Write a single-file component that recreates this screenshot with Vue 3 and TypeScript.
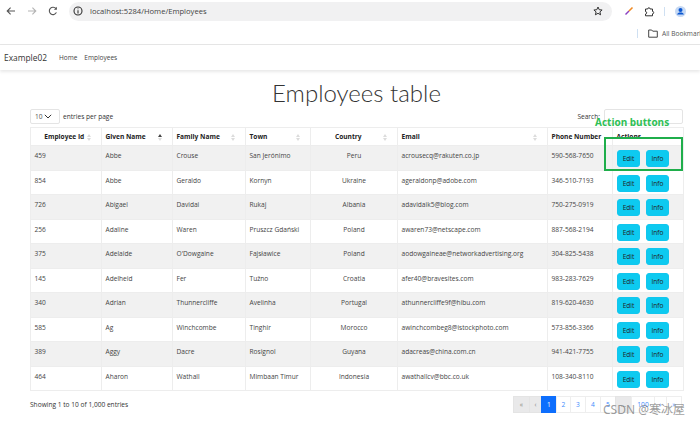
<script setup lang="ts">
interface Employee {
  id: number
  given: string
  family: string
  town: string
  country: string
  email: string
  phone: string
}
const employees: Employee[] = [
  { id: 459, given: 'Abbe', family: 'Crouse', town: 'San Jerónimo', country: 'Peru', email: 'acrousecq@rakuten.co.jp', phone: '590-568-7650' },
  { id: 854, given: 'Abbe', family: 'Geraldo', town: 'Kornyn', country: 'Ukraine', email: 'ageraldonp@adobe.com', phone: '346-510-7193' },
  { id: 726, given: 'Abigael', family: 'Davidai', town: 'Rukaj', country: 'Albania', email: 'adavidaik5@blog.com', phone: '750-275-0919' },
  { id: 256, given: 'Adaline', family: 'Waren', town: 'Pruszcz Gdański', country: 'Poland', email: 'awaren73@netscape.com', phone: '887-568-2194' },
  { id: 375, given: 'Adelaide', family: "O'Dowgaine", town: 'Fajsławice', country: 'Poland', email: 'aodowgaineae@networkadvertising.org', phone: '304-825-5438' },
  { id: 145, given: 'Adelheid', family: 'Fer', town: 'Tužno', country: 'Croatia', email: 'afer40@bravesites.com', phone: '983-283-7629' },
  { id: 340, given: 'Adrian', family: 'Thunnercliffe', town: 'Avelinha', country: 'Portugal', email: 'athunnercliffe9f@hibu.com', phone: '819-620-4630' },
  { id: 585, given: 'Ag', family: 'Winchcombe', town: 'Tinghir', country: 'Morocco', email: 'awinchcombeg8@istockphoto.com', phone: '573-856-3366' },
  { id: 389, given: 'Aggy', family: 'Dacre', town: 'Rosignol', country: 'Guyana', email: 'adacreas@china.com.cn', phone: '941-421-7755' },
  { id: 464, given: 'Aharon', family: 'Wathall', town: 'Mimbaan Timur', country: 'Indonesia', email: 'awathallcv@bbc.co.uk', phone: '108-340-8110' },
]
const columns = [
  { label: 'Employee Id', cls: 'c1 center', sort: 'none' },
  { label: 'Given Name', cls: 'c2', sort: 'asc' },
  { label: 'Family Name', cls: 'c3', sort: 'none' },
  { label: 'Town', cls: 'c4', sort: 'none' },
  { label: 'Country', cls: 'c5 center', sort: 'none' },
  { label: 'Email', cls: 'c6', sort: 'none' },
  { label: 'Phone Number', cls: 'c7', sort: '' },
  { label: 'Actions', cls: 'c8', sort: '' },
]
const pages = [
  { label: '«', cls: 'off w16' },
  { label: '‹', cls: 'off w12' },
  { label: '1', cls: 'active w15' },
  { label: '2', cls: 'w14' },
  { label: '3', cls: 'w15' },
  { label: '4', cls: 'w15' },
  { label: '5', cls: 'w15' },
  { label: '…', cls: 'off w16' },
  { label: '100', cls: 'w23' },
  { label: '›', cls: 'w12' },
  { label: '»', cls: 'w15' },
]
</script>

<template>
  <div class="page">
    <header class="toolbar">
      <svg class="tb back" width="10" height="10" viewBox="0 0 10 10"><path d="M9 5H1.500M4.600 1.600 1.200 5l3.400 3.400" fill="none" stroke="#555" stroke-width="1.100"/></svg>
      <svg class="tb fwd" width="10" height="10" viewBox="0 0 10 10"><path d="M1 5h7.500M5.400 1.600 8.800 5 5.400 8.400" fill="none" stroke="#b4b4b4" stroke-width="1.100"/></svg>
      <svg class="tb reload" width="10" height="10" viewBox="0 0 10 10"><path d="M8.400 6.400A3.700 3.700 0 1 1 8 2.700" fill="none" stroke="#555" stroke-width="1.100"/><path d="M8.900.8v3H5.900z" fill="#555"/></svg>
      <div class="omnibox">
        <svg class="tb" width="10" height="10" viewBox="0 0 10 10"><circle cx="5" cy="5" r="4" fill="none" stroke="#333" stroke-width="1.100"/><path d="M5 2.400v.9M5 4.200v3.200" stroke="#333" stroke-width="1.100"/></svg>
        <span class="url">localhost:5284/Home/Employees</span>
        <svg class="star" width="10" height="10" viewBox="0 0 10 10"><path d="M5 1l1.200 2.700 2.900.3-2.200 1.900.7 2.900L5 7.300 2.400 8.800l.7-2.900L.9 4l2.900-.3z" fill="none" stroke="#333" stroke-width="1"/></svg>
      </div>
      <svg class="pen" width="10" height="10" viewBox="0 0 10 10"><path d="M1.500 8.500 5 5" stroke="#8a3fc0" stroke-width="1.400"/><path d="M5 5 8.500 1.500" stroke="#f08a24" stroke-width="1.600"/></svg>
      <svg class="ext" width="11" height="11" viewBox="0 0 11 11"><path d="M1.500 3h2.200a1.200 1.200 0 0 1 2.400 0h2.400v2.400a1.200 1.200 0 0 1 0 2.400v2H1.500V8a1.200 1.200 0 0 0 0-2.400z" fill="none" stroke="#333" stroke-width="1"/></svg>
      <span class="tb-sep"></span>
      <span class="avatar"><svg width="11" height="11" viewBox="0 0 11 11"><circle cx="5.500" cy="5.500" r="5.500" fill="#c6d9f4"/><circle cx="5.500" cy="4" r="2" fill="#0b57d0"/><path d="M2 8.600c.4-1.500 1.800-2.100 3.500-2.100s3.100.6 3.500 2.100z" fill="#0b57d0"/></svg></span>
    </header>
    <div class="bookmarks">
      <span class="bm-sep"></span>
      <svg class="tb" width="10" height="9" viewBox="0 0 10 9"><path d="M.7 1h3l1 1.200h4.600v6H.7z" fill="none" stroke="#444" stroke-width="1"/></svg>
      <span class="bm-text">All Bookmarks</span>
    </div>
    <nav class="navbar">
      <span class="brand">Example02</span>
      <a class="nav-link">Home</a>
      <a class="nav-link">Employees</a>
    </nav>
    <main class="content">
      <h1 class="title">Employees table</h1>
      <div class="controls">
        <div class="entries">
          <span class="select">10
            <svg width="8" height="5" viewBox="0 0 8 5"><path d="M.8.8 4 4l3.200-3.200" fill="none" stroke="#333" stroke-width="1"/></svg>
          </span>
          <span>entries per page</span>
        </div>
        <div class="search">
          <span>Search:</span>
          <span class="search-box"></span>
        </div>
      </div>
      <table class="grid">
        <thead>
          <tr>
            <th v-for="c in columns" :key="c.label" :class="c.cls">
              <span class="th-label">{{ c.label }}</span>
              <span v-if="c.sort" class="sort">
                <i class="up" :class="{ on: c.sort === 'asc' }"></i>
                <i class="down"></i>
              </span>
            </th>
          </tr>
        </thead>
        <tbody>
          <tr v-for="e in employees" :key="e.id">
            <td>{{ e.id }}</td>
            <td>{{ e.given }}</td>
            <td>{{ e.family }}</td>
            <td>{{ e.town }}</td>
            <td class="center">{{ e.country }}</td>
            <td>{{ e.email }}</td>
            <td>{{ e.phone }}</td>
            <td class="actions">
              <div class="btns">
                <button class="btn">Edit</button>
                <button class="btn">Info</button>
              </div>
            </td>
          </tr>
        </tbody>
      </table>
      <div class="footer">
        <span class="info">Showing 1 to 10 of 1,000 entries</span>
        <div class="pager">
          <span v-for="p in pages" :key="p.label" class="pg" :class="p.cls">{{ p.label }}</span>
        </div>
      </div>
    </main>
    <div class="callout"></div>
    <div class="callout-label">Action buttons</div>
    <div class="watermark">CSDN @寒冰屋</div>
  </div>
</template>

<style scoped>
.page {
  position: relative;
  width: 700px;
  height: 424px;
  overflow: hidden;
  background: #fff;
  font-family: "Open Sans", "Noto Sans", sans-serif;
  color: #333;
  font-size: 6.600px;
}
.toolbar {
  height: 22px;
  display: flex;
  align-items: center;
}
.tb { flex: none; }
.back { margin-left: 6px; }
.fwd { margin-left: 11px; }
.reload { margin-left: 11px; }
.omnibox {
  flex: none;
  margin-left: 11px;
  width: 543px;
  height: 19px;
  background: #f1f1f2;
  border-radius: 10px;
  display: flex;
  align-items: center;
  padding: 0 9px 0 4px;
  box-sizing: border-box;
}
.url { margin-left: 7px; font-size: 7.600px; color: #444; }
.star { margin-left: auto; }
.pen { margin-left: 12px; flex: none; }
.ext { margin-left: 10px; flex: none; }
.tb-sep { width: 1px; height: 9px; background: #cfe0f2; margin-left: 9px; flex: none; }
.avatar { margin-left: 10px; display: flex; flex: none; }
.bookmarks {
  height: 22px;
  display: flex;
  align-items: center;
  padding-left: 637px;
  border-bottom: 1px solid #e6e6e6;
  overflow: hidden;
}
.bm-sep { width: 1px; height: 9px; background: #cfe0f2; margin-right: 10px; flex: none; }
.bm-text { margin-left: 4px; font-size: 6.600px; color: #555; white-space: nowrap; flex: none; }
.navbar {
  height: 25px;
  display: flex;
  align-items: center;
  padding-left: 4px;
  box-shadow: 0 2px 3px rgba(0, 0, 0, 0.09);
}
.brand { font-size: 8.400px; color: #333; margin-right: 12px; }
.nav-link { font-size: 6.500px; color: #444; margin-right: 7px; }
.content { padding: 0 17px 0 30px; }
.title {
  margin: 9px 0 0;
  height: 28px;
  line-height: 28px;
  text-align: center;
  font-family: Lato, "Open Sans", sans-serif;
  font-size: 24px;
  font-weight: 300;
  color: #333;
}
.controls {
  margin-top: 2px;
  height: 15px;
  display: flex;
  justify-content: space-between;
  align-items: center;
}
.entries, .search { display: flex; align-items: center; height: 15px; }
.entries { gap: 3px; }
.select {
  width: 30px;
  height: 15px;
  box-sizing: border-box;
  border: 1px solid #e4e4e4;
  border-radius: 2px;
  display: flex;
  align-items: center;
  justify-content: space-between;
  padding: 0 7px 0 4px;
  color: #555;
}
.search { gap: 4px; }
.search-box {
  width: 79px;
  height: 15px;
  box-sizing: border-box;
  border: 1px solid #e4e4e4;
  border-radius: 2px;
}
.grid {
  margin-top: 3px;
  width: 653px;
  table-layout: fixed;
  border-collapse: collapse;
}
.grid th, .grid td {
  border: 1px solid #ededed;
  box-sizing: border-box;
  padding: 0 3.500px;
  font-size: 6.600px;
  overflow: hidden;
  white-space: nowrap;
}
.grid th {
  height: 18px;
  text-align: left;
  font-weight: 700;
  color: #222;
  position: relative;
}
.grid td {
  height: 24.500px;
  vertical-align: top;
  padding-top: 5px;
  color: #444;
}
.grid tbody tr:nth-child(odd) td { background: #f1f1f1; }
.grid .center { text-align: center; }
.grid th.c1 { padding-right: 7px; }
.grid th.c5 { padding-right: 15px; }
.c1 { width: 71px; }
.c2 { width: 71px; }
.c3 { width: 73px; }
.c4 { width: 65px; }
.c5 { width: 87px; }
.c6 { width: 150px; }
.c7 { width: 65px; }
.c8 { width: 71px; }
.sort {
  position: absolute;
  right: 10px;
  top: 6px;
  display: flex;
  flex-direction: column;
  gap: 1px;
}
.sort i { display: block; width: 0; height: 0; border-left: 2px solid transparent; border-right: 2px solid transparent; }
.up { border-bottom: 3px solid #dcdcdc; }
.up.on { border-bottom-color: #444; }
.down { border-top: 3px solid #dcdcdc; }
.grid td.actions { padding: 4px 0 0 4px; }
.btns { display: flex; gap: 6px; }
.btn {
  width: 23px;
  height: 17px;
  padding: 0;
  border: 1px solid #12c6ee;
  border-radius: 3px;
  background: #0dcaf0;
  color: #222;
  font: inherit;
  font-size: 6.600px;
}
.footer {
  margin-top: 5px;
  height: 17px;
  display: flex;
  justify-content: space-between;
  align-items: center;
}
.pager { display: flex; margin-right: 1px; }
.pg {
  height: 17px;
  box-sizing: border-box;
  border: 1px solid #eee;
  margin-left: -1px;
  display: flex;
  align-items: center;
  justify-content: center;
  color: #3f8bfd;
  background: #fff;
}
.pg.off { background: #e9e9ea; color: #888; border-color: #e4e4e4; }
.pg.active { background: #0d6efd; border-color: #0d6efd; color: #fff; }
.w12 { width: 13px; }
.w14 { width: 15px; }
.w15 { width: 16px; }
.w16 { width: 17px; }
.w23 { width: 24px; }
.callout {
  position: absolute;
  left: 604px;
  top: 137px;
  width: 79px;
  height: 34px;
  box-sizing: border-box;
  border: 2px solid #1fae4b;
}
.callout-label {
  position: absolute;
  left: 595px;
  top: 115px;
  font-size: 10px;
  font-weight: 700;
  color: #2fbf55;
  white-space: nowrap;
}
.watermark {
  position: absolute;
  left: 603px;
  top: 402px;
  font-family: "Noto Sans", "Noto Sans CJK SC", sans-serif;
  font-size: 12px;
  line-height: 16px;
  color: rgba(90, 90, 90, 0.6);
  white-space: nowrap;
}
</style>
